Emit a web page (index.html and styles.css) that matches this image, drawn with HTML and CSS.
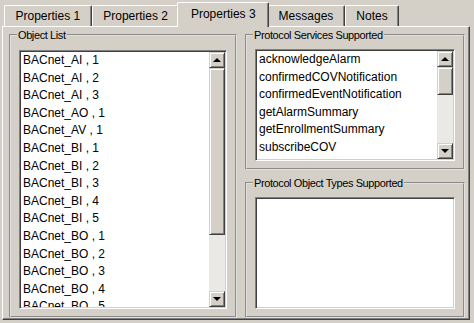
FILE: index.html
```html
<!DOCTYPE html>
<html lang="en">
<head>
<meta charset="utf-8">
<title>Device Properties</title>
<link rel="stylesheet" href="styles.css">
</head>
<body>
<div class="window">
  <div class="tabs">
    <div class="tab">Properties 1</div>
    <div class="tab">Properties 2</div>
    <div class="tab active">Properties 3</div>
    <div class="tab">Messages</div>
    <div class="tab">Notes</div>
  </div>

  <div class="panel">
    <fieldset class="group group-objects">
      <legend>Object List</legend>
      <div class="listbox list-tall">
        <ul class="items">
          <li>BACnet_AI , 1</li>
          <li>BACnet_AI , 2</li>
          <li>BACnet_AI , 3</li>
          <li>BACnet_AO , 1</li>
          <li>BACnet_AV , 1</li>
          <li>BACnet_BI , 1</li>
          <li>BACnet_BI , 2</li>
          <li>BACnet_BI , 3</li>
          <li>BACnet_BI , 4</li>
          <li>BACnet_BI , 5</li>
          <li>BACnet_BO , 1</li>
          <li>BACnet_BO , 2</li>
          <li>BACnet_BO , 3</li>
          <li>BACnet_BO , 4</li>
          <li>BACnet_BO , 5</li>
        </ul>
        <div class="scrollbar">
          <div class="sbtn"><span class="arrow up"></span></div>
          <div class="thumb thumb-tall"></div>
          <div class="track"></div>
          <div class="sbtn"><span class="arrow down"></span></div>
        </div>
      </div>
    </fieldset>

    <div class="column">
      <fieldset class="group">
        <legend>Protocol Services Supported</legend>
        <div class="listbox list-short">
          <ul class="items">
            <li>acknowledgeAlarm</li>
            <li>confirmedCOVNotification</li>
            <li>confirmedEventNotification</li>
            <li>getAlarmSummary</li>
            <li>getEnrollmentSummary</li>
            <li>subscribeCOV</li>
          </ul>
          <div class="scrollbar">
            <div class="sbtn"><span class="arrow up"></span></div>
            <div class="thumb thumb-short"></div>
            <div class="track"></div>
            <div class="sbtn"><span class="arrow down"></span></div>
          </div>
        </div>
      </fieldset>

      <fieldset class="group">
        <legend>Protocol Object Types Supported</legend>
        <div class="listbox list-short">
          <ul class="items"></ul>
        </div>
      </fieldset>
    </div>
  </div>
</div>
</body>
</html>
```

FILE: styles.css
```css
body {
margin: 0;
background: #d4d0c8;
font-family: "Liberation Sans", Arial, sans-serif;
font-size: 12px;
color: #000;
}

.window {
padding: 2px 4px 0 2px;
}

/* ----------- tabs ----------- */
.tabs {
display: flex;
align-items: flex-end;
height: 24px;
padding-left: 2px;
}
.tab {
height: 20px;
line-height: 20px;
padding: 0 10.5px;
border-top: 1px solid #fff;
border-left: 1px solid #fff;
border-right: 1px solid #404040;
border-radius: 2px 2px 0 0;
box-shadow: inset -1px 0 #808080;
white-space: nowrap;
}
.tab.active {
position: relative;
z-index: 1;
height: 24px;
line-height: 22px;
padding: 0 12.5px;
margin: 0 -2px -1px;
background: #d4d0c8;
}

/* ----------- panel ----------- */
.panel {
display: flex;
gap: 8px;
padding: 2px 4px 1px 6px;
border: 1px solid;
border-color: #fff #404040 #404040 #fff;
box-shadow: inset -1px -1px #808080;
}
.column {
display: flex;
flex-direction: column;
gap: 7px;
width: 220px;
}

.group {
margin: 0;
min-width: 0;
padding: 8px 8px 7px;
border: 2px groove #e0e0e0;
}
.group-objects {
width: 228px;
box-sizing: border-box;
padding-top: 9px;
}
.group legend {
margin-left: -2px;
padding: 0 1px;
font-size: 11px;
letter-spacing: -0.4px;
line-height: 12px;
}

/* ----------- list boxes ----------- */
.listbox {
display: flex;
background: #fff;
border: 1px solid;
border-color: #808080 #fff #fff #808080;
box-shadow: inset 1px 1px #404040, inset -1px -1px #d4d0c8;
padding: 1px;
overflow: hidden;
}
.list-tall {height: 255px;}
.list-short {height: 108px;}

.items {
flex: 1;
margin: 0;
padding: 0 0 0 2px;
list-style: none;
overflow: hidden;
}
.items li {
height: 17.6px;
line-height: 17.6px;
white-space: nowrap;
}

/* ----------- scrollbar ----------- */
.scrollbar {
display: flex;
flex-direction: column;
width: 16px;
background: #ebe9e5;
}
.sbtn, .thumb {
box-sizing: border-box;
background: #d4d0c8;
border: 1px solid;
border-color: #d4d0c8 #404040 #404040 #d4d0c8;
box-shadow: inset 1px 1px #fff, inset -1px -1px #808080;
}
.sbtn {
display: flex;
align-items: center;
justify-content: center;
height: 16px;
}
.thumb-tall {height: 167px;}
.thumb-short {height: 28px;}
.track {flex: 1;}

.arrow {
width: 0;
height: 0;
border-left: 4px solid transparent;
border-right: 4px solid transparent;
}
.arrow.up {border-bottom: 4px solid #000;}
.arrow.down {border-top: 4px solid #000;}
```
